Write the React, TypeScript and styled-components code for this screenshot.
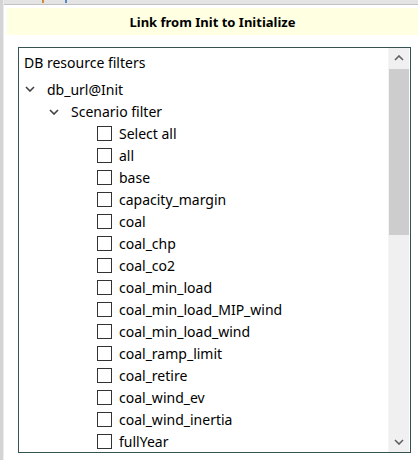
import styled, { createGlobalStyle } from "styled-components";

const GlobalStyle = createGlobalStyle`
  html, body {
    margin: 0;
    padding: 0;
    background: #ffffff;
  }
  body {
    font-family: "Noto Sans", "Open Sans", sans-serif;
    color: #000000;
  }
`;

const scenarios = [
  "all",
  "base",
  "capacity_margin",
  "coal",
  "coal_chp",
  "coal_co2",
  "coal_min_load",
  "coal_min_load_MIP_wind",
  "coal_min_load_wind",
  "coal_ramp_limit",
  "coal_retire",
  "coal_wind_ev",
  "coal_wind_inertia",
  "fullYear",
];

function Chevron({ up }: { up?: boolean }) {
  return (
    <svg width="10" height="6" viewBox="0 0 10 6">
      <polyline
        points={up ? "1,5 5,1 9,5" : "1,1 5,5 9,1"}
        fill="none"
        stroke="currentColor"
        strokeWidth="1.6"
      />
    </svg>
  );
}

function App() {
  return (
    <Page>
      <GlobalStyle />
      <Rail />
      <Main>
        <TopStrip>
          <Mark $left={38} $color="#d08a3c" />
          <Mark $left={61} $color="#5b86c4" />
        </TopStrip>
        <Title>Link from Init to Initialize</Title>
        <Body>
          <ListBox>
            <List>
              <Header>DB resource filters</Header>
              <TreeRow $depth={0}>
                <Toggle><Chevron /></Toggle>
                db_url@Init
              </TreeRow>
              <TreeRow $depth={1} $short>
                <Toggle><Chevron /></Toggle>
                Scenario filter
              </TreeRow>
              {["Select all", ...scenarios].map((name) => (
                <CheckRow key={name}>
                  <CheckBox />
                  {name}
                </CheckRow>
              ))}
            </List>
            <Scrollbar>
              <ScrollButton><Chevron up /></ScrollButton>
              <Track>
                <Thumb />
              </Track>
              <ScrollButton><Chevron /></ScrollButton>
            </Scrollbar>
          </ListBox>
        </Body>
      </Main>
    </Page>
  );
}

const Page = styled.div`
  display: flex;
  width: 418px;
  height: 460px;
  overflow: hidden;
`;
const Rail = styled.div`
  width: 3px;
  flex-shrink: 0;
  background: #d4d4d4;
  border-right: 1px solid #ececec;
`;
const Main = styled.div`
  flex: 1;
  display: flex;
  flex-direction: column;
  min-width: 0;
`;
const TopStrip = styled.div`
  position: relative;
  height: 4px;
  background: #e4e4e4;
  border-bottom: 1px solid #c2c2c2;
  margin-bottom: 3px;
`;
const Mark = styled.span<{ $left: number; $color: string }>`
  position: absolute;
  top: 0;
  left: ${(p) => p.$left}px;
  width: 2px;
  height: 3px;
  background: ${(p) => p.$color};
`;
const Title = styled.div`
  height: 27px;
  margin-left: 3px;
  background: #ffffe1;
  display: flex;
  align-items: center;
  justify-content: center;
  font-weight: 700;
  font-size: 13px;
  color: #000000;
`;
const Body = styled.div`
  padding: 12px 7px 0 14px;
`;
const ListBox = styled.div`
  display: flex;
  height: 404px;
  border: 1px solid #345252;
  background: #ffffff;
`;
const List = styled.div`
  flex: 1;
  padding: 4px 0 0 5px;
  overflow: hidden;
  font-size: 14px;
`;
const Header = styled.div`
  height: 22px;
  line-height: 22px;
  margin-bottom: 3px;
`;
const TreeRow = styled.div<{ $depth: number; $short?: boolean }>`
  display: flex;
  align-items: center;
  height: ${(p) => (p.$short ? 21 : 24)}px;
  padding-left: ${(p) => 1 + p.$depth * 24}px;
  white-space: nowrap;
`;
const Toggle = styled.span`
  display: flex;
  align-items: center;
  width: 22px;
  color: #404040;
`;
const CheckRow = styled.div`
  display: flex;
  align-items: center;
  height: 22px;
  padding-left: 73px;
  white-space: nowrap;
`;
const CheckBox = styled.span`
  width: 13px;
  height: 13px;
  border: 1px solid #333333;
  background: #ffffff;
  margin-right: 7px;
  flex-shrink: 0;
`;
const Scrollbar = styled.div`
  width: 20px;
  margin-right: 1px;
  display: flex;
  flex-direction: column;
  background: #f0f0f0;
  border-left: 1px solid #f4f4f4;
`;
const ScrollButton = styled.div`
  height: 20px;
  display: flex;
  align-items: center;
  justify-content: center;
  color: #606060;
`;
const Track = styled.div`
  flex: 1;
  padding-top: 1px;
`;
const Thumb = styled.div`
  height: 166px;
  background: #cdcdcd;
`;

export default App;
